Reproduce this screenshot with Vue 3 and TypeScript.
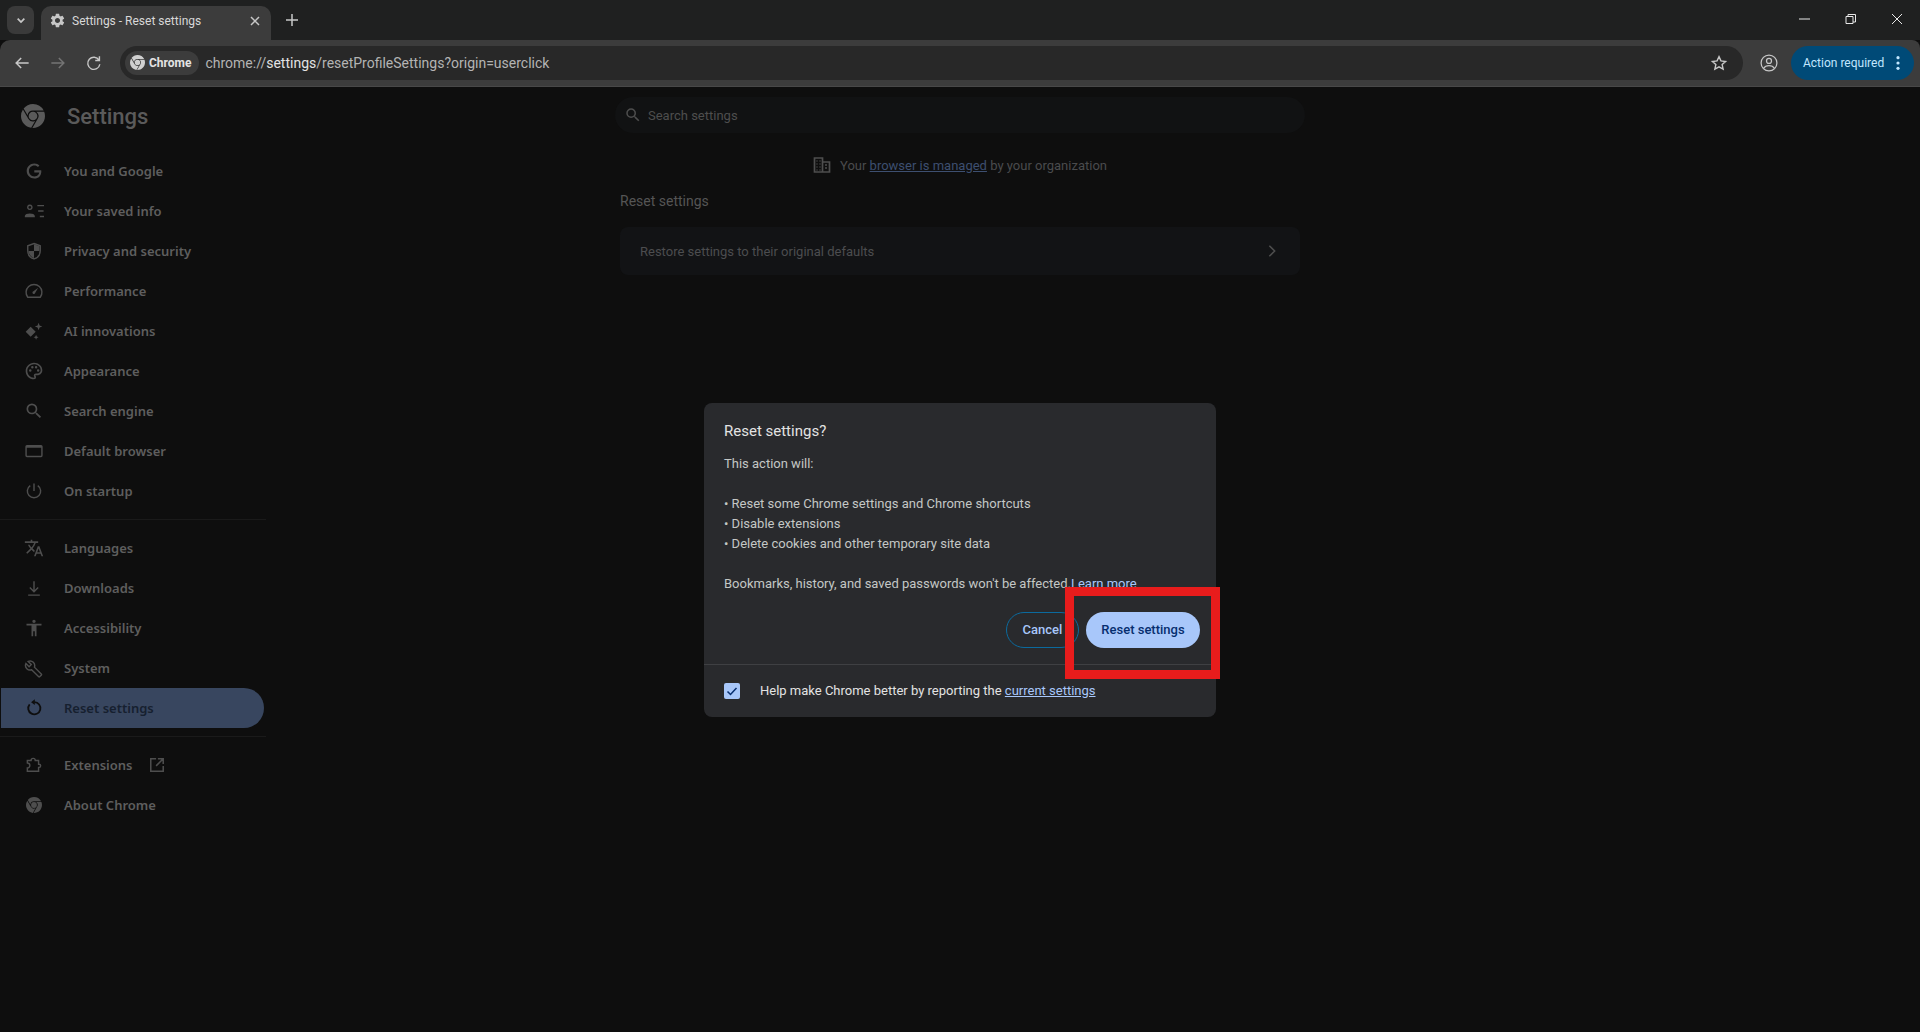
<script setup lang="ts">
interface NavIcon {
  box?: string
  fill?: string[]
  stroke?: string[]
}

interface NavItem {
  label: string
  icon: NavIcon
  active?: boolean
  external?: boolean
}

const chromeLogo =
  'M12 0C8.21 0 4.831 1.757 2.632 4.501l3.953 6.848A5.454 5.454 0 0 1 12 6.545h10.691A12 12 0 0 0 12 0zM1.931 5.47A11.943 11.943 0 0 0 0 12c0 6.012 4.42 10.991 10.189 11.864l3.953-6.847a5.45 5.45 0 0 1-6.865-2.29zm13.342 2.166a5.446 5.446 0 0 1 1.45 7.09l.002.001h-.002l-5.344 9.257c.206.01.413.016.621.016 6.627 0 12-5.373 12-12 0-1.54-.29-3.011-.818-4.364zM12 16.364a4.364 4.364 0 1 1 0-8.728 4.364 4.364 0 0 1 0 8.728Z'
const gear =
  'M19.14 12.94c.04-.3.06-.61.06-.94 0-.32-.02-.64-.07-.94l2.03-1.58a.49.49 0 0 0 .12-.61l-1.92-3.32a.488.488 0 0 0-.59-.22l-2.39.96c-.5-.38-1.03-.7-1.62-.94l-.36-2.54a.484.484 0 0 0-.48-.41h-3.84c-.24 0-.43.17-.47.41l-.36 2.54c-.59.24-1.13.57-1.62.94l-2.39-.96c-.22-.08-.47 0-.59.22L2.74 8.87c-.12.21-.08.47.12.61l2.03 1.58c-.05.3-.09.63-.09.94s.02.64.07.94l-2.03 1.58a.49.49 0 0 0-.12.61l1.92 3.32c.12.22.37.29.59.22l2.39-.96c.5.38 1.03.7 1.62.94l.36 2.54c.05.24.24.41.48.41h3.84c.24 0 .44-.17.47-.41l.36-2.54c.59-.24 1.13-.56 1.62-.94l2.39.96c.22.08.47 0 .59-.22l1.92-3.32c.12-.22.07-.47-.12-.61l-2.01-1.58zM12 15.6c-1.98 0-3.6-1.62-3.6-3.6s1.62-3.6 3.6-3.6 3.6 1.62 3.6 3.6-1.62 3.6-3.6 3.6z'
const search =
  'M15.5 14h-.79l-.28-.27A6.471 6.471 0 0 0 16 9.5 6.5 6.5 0 1 0 9.5 16c1.61 0 3.09-.59 4.23-1.57l.27.28v.79l5 4.99L20.49 19l-4.99-5zm-6 0C7.01 14 5 11.99 5 9.5S7.01 5 9.5 5 14 7.01 14 9.5 11.99 14 9.5 14z'

const navGroups: NavItem[][] = [
  [
    {
      label: 'You and Google',
      icon: {
        box: '-4 -4 32 32',
        fill: [
          'M12.48 10.92v3.28h7.84c-.24 1.84-.853 3.187-1.787 4.133-1.147 1.147-2.933 2.4-6.053 2.4-4.827 0-8.6-3.893-8.6-8.72s3.773-8.72 8.6-8.72c2.6 0 4.507 1.027 5.907 2.347l2.307-2.307C18.747 1.44 16.133 0 12.48 0 5.867 0 .307 5.387.307 12s5.56 12 12.173 12c3.573 0 6.267-1.173 8.373-3.36 2.16-2.16 2.84-5.213 2.84-7.667 0-.76-.053-1.467-.173-2.053H12.48z'
        ]
      }
    },
    {
      label: 'Your saved info',
      icon: {
        fill: ['M1 19.500V18c0-2 3-3 6-3s6 1 6 3v1.500z'],
        stroke: ['M7 5a2.500 2.500 0 1 0 .01 0zM16 5.500h8M17 12h6.500M19 18.500h5']
      }
    },
    {
      label: 'Privacy and security',
      icon: {
        fill: ['M12 12V4l6.500 2.400V12zM12 12v8.500C8.500 19.300 5.500 15.800 5.500 12z'],
        stroke: ['M12 3l7.500 2.800v5.700c0 4.800-3.200 8.800-7.500 10-4.300-1.200-7.500-5.200-7.500-10V5.800z']
      }
    },
    {
      label: 'Performance',
      icon: {
        fill: ['M10.500 13l6.500-5-4 7a1.600 1.600 0 0 1-2.500-2z'],
        stroke: ['M4.500 19.500a9.500 9.500 0 1 1 15 0z']
      }
    },
    {
      label: 'AI innovations',
      icon: {
        fill: [
          'M8 7l6 6-6 6-6-6zM17.500 2l1.200 3.300 3.300 1.200-3.300 1.200-1.200 3.300-1.200-3.300L13 6.500l3.300-1.200zM14.500 16.500l.9 2.100 2.100.9-2.100.9-.9 2.100-.9-2.100-2.100-.9 2.100-.9z'
        ]
      }
    },
    {
      label: 'Appearance',
      icon: {
        fill: [
          'M12 22C6.490 22 2 17.510 2 12S6.490 2 12 2s10 4.040 10 9c0 3.310-2.690 6-6 6h-1.770c-.280 0-.500.220-.500.500 0 .120.050.230.130.330.410.470.640 1.060.640 1.670A2.500 2.500 0 0 1 12 22zm0-18c-4.410 0-8 3.590-8 8s3.590 8 8 8c.280 0 .500-.220.500-.500a.540.540 0 0 0-.140-.350c-.410-.460-.630-1.050-.630-1.650a2.500 2.500 0 0 1 2.500-2.500H16c2.210 0 4-1.790 4-4 0-3.860-3.590-7-8-7z',
          'M6 11.500a1.500 1.500 0 1 0 3 0 1.500 1.500 0 1 0-3 0zM8.500 7.500a1.500 1.500 0 1 0 3 0 1.500 1.500 0 1 0-3 0zM13 7.500a1.500 1.500 0 1 0 3 0 1.500 1.500 0 1 0-3 0zM15.500 11.500a1.500 1.500 0 1 0 3 0 1.500 1.500 0 1 0-3 0z'
        ]
      }
    },
    { label: 'Search engine', icon: { fill: [search] } },
    {
      label: 'Default browser',
      icon: { stroke: ['M3.500 5.500h17a1 1 0 0 1 1 1v11a1 1 0 0 1-1 1h-17a1 1 0 0 1-1-1v-11a1 1 0 0 1 1-1zM2.500 7.200h19'] }
    },
    {
      label: 'On startup',
      icon: { stroke: ['M12 3v9M7.500 5.500a8 8 0 1 0 9 0'] }
    }
  ],
  [
    {
      label: 'Languages',
      icon: {
        fill: [
          'M12.870 15.070l-2.540-2.510.030-.030c1.740-1.940 2.980-4.170 3.710-6.530H17V4h-7V2H8v2H1v1.990h11.170C11.500 7.920 10.440 9.750 9 11.350 8.070 10.320 7.300 9.190 6.690 8h-2c.730 1.630 1.730 3.170 2.980 4.560l-5.090 5.020L4 19l5-5 3.110 3.110.760-2.040zM18.500 10h-2L12 22h2l1.120-3h4.750L21 22h2l-4.500-12zm-2.620 7l1.620-4.330L19.120 17h-3.240z'
        ]
      }
    },
    {
      label: 'Downloads',
      icon: { stroke: ['M12 4v12M7 11.500l5 5 5-5M5 20.500h14'] }
    },
    {
      label: 'Accessibility',
      icon: {
        fill: ['M12 2c1.100 0 2 .900 2 2s-.900 2-2 2-2-.900-2-2 .900-2 2-2zm9 7h-6v13h-2v-6h-2v6H9V9H3V7h18v2z']
      }
    },
    {
      label: 'System',
      icon: {
        stroke: [
          'M21 19.500l-8.500-8.500c.700-2 .300-4.200-1.300-5.800-1.700-1.700-4.100-2-6.200-1.100l3.700 3.700-2.600 2.600-3.800-3.700c-.900 2-.500 4.500 1.100 6.100 1.600 1.600 3.800 2 5.800 1.300l8.500 8.500c.300.300.700.300 1 0l2.300-2.300c.200-.200.200-.600 0-.800z'
        ]
      }
    },
    {
      label: 'Reset settings',
      active: true,
      icon: {
        fill: ['M13 1.500v7L8.500 5z'],
        stroke: ['M12.500 5a7.300 7.300 0 1 1-5.700 2.600']
      }
    }
  ],
  [
    {
      label: 'Extensions',
      external: true,
      icon: {
        stroke: ['M4 6.500h4.500a2.500 2.500 0 0 1 5 0h4v4.500h.5a2 2 0 0 1 0 4h-.5v4.500H4v-4a3 3 0 0 0 0-6z']
      }
    },
    { label: 'About Chrome', icon: { box: '-3 -3 30 30', fill: [chromeLogo] } }
  ]
]
</script>

<template>
  <div class="window">
    <header class="tabstrip">
      <button class="tab-search">
        <svg viewBox="0 0 24 24" width="16" height="16"><path d="M7 10l5 5 5-5" class="st" stroke-width="2.600" /></svg>
      </button>
      <div class="tab">
        <svg viewBox="0 0 24 24" width="17" height="17"><path :d="gear" fill="#c7c7c7" /></svg>
        <span class="tab-title">Settings - Reset settings</span>
        <svg viewBox="0 0 24 24" width="16" height="16"><path d="M6 6l12 12M18 6L6 18" class="st" stroke-width="2.200" /></svg>
      </div>
      <svg class="new-tab" viewBox="0 0 24 24" width="18" height="18"><path d="M12 4v16M4 12h16" class="st" stroke-width="2" /></svg>
      <div class="caption">
        <svg viewBox="0 0 12 12" width="12" height="12"><path d="M0 6h11" class="cap" /></svg>
        <svg viewBox="0 0 12 12" width="12" height="12"><path d="M1 3.500h7v7H1zM3 3.500V1.500h7.500V9H8" class="cap" /></svg>
        <svg viewBox="0 0 12 12" width="12" height="12"><path d="M1 1l10 10M11 1L1 11" class="cap" /></svg>
      </div>
    </header>

    <div class="toolbar">
      <svg viewBox="0 0 24 24" width="20" height="20"><path d="M20 12H5M11 6l-6 6 6 6" class="st" stroke-width="1.800" /></svg>
      <svg class="disabled" viewBox="0 0 24 24" width="20" height="20"><path d="M4 12h15M13 6l6 6-6 6" class="st" stroke-width="1.800" /></svg>
      <svg viewBox="0 0 24 24" width="20" height="20"><path d="M18 8.500A7.300 7.300 0 1 0 19 13.500M18.500 4v5h-5" class="st" stroke-width="1.700" /></svg>
      <div class="omnibox">
        <span class="chip">
          <svg viewBox="0 0 24 24" width="15" height="15"><path :d="chromeLogo" fill="#d0d0d0" /></svg>
          Chrome
        </span>
        <span class="url">chrome://<b>settings</b>/resetProfileSettings?origin=userclick</span>
        <svg class="star" viewBox="0 0 24 24" width="18" height="18"><path d="M12 3.500l2.600 5.700 6.200.7-4.600 4.200 1.300 6.100L12 17.100l-5.500 3.100 1.300-6.100-4.600-4.200 6.200-.7z" class="st" stroke-width="1.900" /></svg>
      </div>
      <svg class="profile" viewBox="0 0 24 24" width="20" height="20">
        <circle cx="12" cy="12" r="9.500" class="st" stroke-width="1.500" />
        <circle cx="12" cy="9.500" r="3" class="st" stroke-width="1.500" />
        <path d="M5.500 18.500c1.500-2.500 4-3.300 6.500-3.300s5 .8 6.500 3.300" class="st" stroke-width="1.500" />
      </svg>
      <div class="action">
        <span>Action required</span>
        <svg viewBox="0 0 4 18" width="4" height="16"><circle cx="2" cy="3" r="1.800" /><circle cx="2" cy="9" r="1.800" /><circle cx="2" cy="15" r="1.800" /></svg>
      </div>
    </div>

    <div class="page">
      <aside class="sidebar">
        <div class="brand">
          <svg viewBox="0 0 24 24" width="24" height="24"><path :d="chromeLogo" fill="#5a5a5a" /></svg>
          <span>Settings</span>
        </div>
        <nav>
          <template v-for="(group, i) in navGroups" :key="i">
            <hr v-if="i > 0" />
            <a v-for="item in group" :key="item.label" class="nav-item" :class="{ active: item.active }">
              <svg :viewBox="item.icon.box ?? '0 0 24 24'" width="20" height="20" class="nav-icon">
                <path v-for="d in item.icon.fill" :key="d" :d="d" class="nav-fill" />
                <path v-for="d in item.icon.stroke" :key="d" :d="d" class="nav-stroke" />
              </svg>
              <span>{{ item.label }}</span>
              <svg v-if="item.external" class="ext" viewBox="0 0 18 18" width="16" height="16">
                <path d="M8 2H2v14h14v-6M10 2h6v6M16 2L8 10" class="nav-stroke" />
              </svg>
            </a>
          </template>
        </nav>
      </aside>

      <main class="content">
        <div class="search-box">
          <svg viewBox="0 0 24 24" width="18" height="18"><path :d="search" fill="#4e4e4e" /></svg>
          <span>Search settings</span>
        </div>
        <div class="managed">
          <svg viewBox="0 0 18 18" width="18" height="18">
            <path d="M1.500 2h8v14h-8zM9.500 6h7v10h-7zM3.500 5h1M6.500 5h1M3.500 8h1M6.500 8h1M3.500 11h1M6.500 11h1M3.500 14h1M6.500 14h1M12 9h2M12 12h2" class="nav-stroke" />
          </svg>
          <span>Your <a>browser is managed</a> by your organization</span>
        </div>
        <h2>Reset settings</h2>
        <div class="card">
          <span>Restore settings to their original defaults</span>
          <svg viewBox="0 0 18 18" width="16" height="16"><path d="M6 3l6 6-6 6" class="nav-stroke" /></svg>
        </div>
      </main>

      <div class="scrim">
        <section class="dialog">
          <div class="dialog-body">
            <h3>Reset settings?</h3>
            <p>This action will:</p>
            <p class="gap">• Reset some Chrome settings and Chrome shortcuts</p>
            <p>• Disable extensions</p>
            <p>• Delete cookies and other temporary site data</p>
            <p class="gap">Bookmarks, history, and saved passwords won't be affected.<a class="learn">Learn more</a></p>
            <div class="buttons">
              <button class="btn cancel">Cancel</button>
              <button class="btn confirm">Reset settings</button>
            </div>
          </div>
          <div class="dialog-foot">
            <span class="check">
              <svg viewBox="0 0 16 16" width="16" height="16"><path d="M3.500 8.500l3 3 6-6.500" fill="none" stroke="#062e6f" stroke-width="1.500" /></svg>
            </span>
            <span>Help make Chrome better by reporting the <a>current settings</a></span>
          </div>
          <div class="highlight"></div>
        </section>
      </div>
    </div>
  </div>
</template>

<style scoped>
.window {
  height: 1032px;
  overflow: hidden;
  display: flex;
  flex-direction: column;
  background: #0e0e0e;
  font-family: Roboto, "Noto Sans", sans-serif;
}

button {
  font-family: inherit;
  border: none;
}

.st {
  fill: none;
  stroke: #c7c7c7;
}

.cap {
  fill: none;
  stroke: #e8e8e8;
  stroke-width: 1;
}

.tabstrip {
  height: 40px;
  flex: none;
  display: flex;
  align-items: flex-end;
  background: #1f2020;
  padding-left: 7px;
}

.tab-search {
  width: 27px;
  height: 28px;
  margin-bottom: 6px;
  border-radius: 8px;
  background: #3a3a3a;
  display: flex;
  align-items: center;
  justify-content: center;
  padding: 0;
}

.tab {
  position: relative;
  width: 230px;
  height: 34px;
  margin-left: 7px;
  box-sizing: border-box;
  padding: 0 8px 5px 8px;
  display: flex;
  align-items: center;
  gap: 6px;
  background: #3c3c3c;
  border-radius: 10px 10px 0 0;
  color: #d8d8d8;
  font-size: 12px;
}

.tab-title {
  flex: 1;
  white-space: nowrap;
}

.new-tab {
  margin: 0 0 11px 12px;
}

.caption {
  margin-left: auto;
  align-self: center;
  width: 138px;
  display: flex;
  align-items: center;
  justify-content: space-around;
  padding-bottom: 2px;
}

.toolbar {
  height: 47px;
  flex: none;
  box-sizing: border-box;
  display: flex;
  align-items: center;
  gap: 16px;
  padding: 0 6px 1px 12px;
  background: #3c3c3c;
  border-bottom: 1px solid #484848;
  border-radius: 10px 8px 0 0;
}

.disabled {
  opacity: 0.4;
}

.omnibox {
  flex: 1;
  height: 34px;
  display: flex;
  align-items: center;
  padding: 0 15px 0 5px;
  border-radius: 17px;
  background: #282828;
}

.chip {
  height: 24px;
  padding: 0 8px 0 5px;
  display: flex;
  align-items: center;
  gap: 4px;
  border-radius: 12px;
  background: #3c3c3c;
  color: #e3e3e3;
  font-size: 12px;
  font-weight: 700;
}

.url {
  margin-left: 6px;
  flex: 1;
  color: #b4b4b4;
  font-size: 14px;
  white-space: nowrap;
}

.url b {
  color: #e3e3e3;
  font-weight: 400;
}

.profile {
  margin-right: -4px;
}

.action {
  width: 123px;
  height: 34px;
  box-sizing: border-box;
  display: flex;
  align-items: center;
  justify-content: space-between;
  padding: 0 14px 0 12px;
  border-radius: 17px;
  background: #004a77;
  color: #c2e7ff;
  font-size: 12px;
}

.action svg {
  fill: #c2e7ff;
}

.page {
  position: relative;
  flex: 1;
  display: grid;
  grid-template-columns: 266px 1fr 266px;
}

.brand {
  height: 56px;
  padding-top: 2px;
  box-sizing: border-box;
  display: flex;
  align-items: center;
  gap: 22px;
  padding-left: 21px;
  color: #5a5a5a;
  font-size: 22px;
  font-weight: 500;
}

.sidebar nav {
  padding-top: 8px;
}

.sidebar hr {
  margin: 8px 0;
  border: none;
  border-top: 1px solid #1a1a1a;
}

.nav-item {
  height: 40px;
  margin-right: 2px;
  margin-left: 1px;
  padding-left: 23px;
  display: flex;
  align-items: center;
  gap: 20px;
  color: #5e5e5e;
  font-family: "Noto Sans", sans-serif;
  font-size: 13px;
  font-weight: 600;
  border-radius: 0 20px 20px 0;
}

.nav-item.active {
  background: #38465f;
  color: #16202f;
}

.nav-fill {
  fill: #4e4e4e;
}

.nav-stroke {
  fill: none;
  stroke: #4e4e4e;
  stroke-width: 1.700;
}

.nav-item.active .nav-stroke {
  stroke: #0e0e0e;
  stroke-width: 2.200;
}

.nav-item.active .nav-fill {
  fill: #0e0e0e;
}

.ext {
  margin-left: -4px;
}

.content {
  grid-column: 2;
  display: flex;
  flex-direction: column;
  align-items: center;
  padding-top: 10px;
}

.search-box {
  width: 690px;
  height: 36px;
  flex: none;
  box-sizing: border-box;
  padding-left: 9px;
  display: flex;
  align-items: center;
  gap: 6px;
  border-radius: 18px;
  background: #111213;
  color: #4e4e4e;
  font-size: 13px;
}

.managed {
  margin-top: 22px;
  height: 20px;
  display: flex;
  align-items: center;
  gap: 9px;
  color: #4a4b4d;
  font-size: 13px;
}

.managed a {
  color: #3d4f70;
  text-decoration: underline;
}

.content h2 {
  width: 680px;
  margin: 16px 0 0;
  color: #555;
  font-size: 14px;
  font-weight: 400;
  line-height: 20px;
}

.card {
  width: 680px;
  height: 48px;
  margin-top: 16px;
  box-sizing: border-box;
  padding: 0 20px;
  display: flex;
  align-items: center;
  justify-content: space-between;
  border-radius: 8px;
  background: #121315;
  color: #4c4d4f;
  font-size: 13px;
}

.scrim {
  position: absolute;
  inset: 0;
  display: flex;
  align-items: center;
  justify-content: center;
}

.dialog {
  position: relative;
  width: 512px;
  border-radius: 8px;
  background: #292a2d;
  color: #c4c7c5;
  font-size: 13px;
  line-height: 20px;
}

.dialog-body {
  padding: 18px 16px 16px 20px;
}

.dialog h3 {
  margin: 0 0 13px;
  color: #e3e3e3;
  font-size: 15px;
  font-weight: 400;
  line-height: 20px;
}

.dialog p {
  margin: 0;
}

.dialog p.gap {
  margin-top: 20px;
}

.learn {
  color: #a8c7fa;
}

.buttons {
  margin-top: 18px;
  display: flex;
  justify-content: flex-end;
  gap: 7px;
}

.btn {
  height: 36px;
  padding: 0;
  border-radius: 18px;
  font-size: 13px;
  font-weight: 500;
}

.cancel {
  width: 73px;
  background: transparent;
  border: 1px solid #0b6a9e;
  color: #a8c7fa;
  font-weight: 500;
}

.confirm {
  width: 114px;
  background: #a8c7fa;
  color: #062e6f;
}

.dialog-foot {
  height: 53px;
  box-sizing: border-box;
  padding: 0 20px;
  display: flex;
  align-items: center;
  gap: 20px;
  border-top: 1px solid #3f4043;
  color: #e3e3e3;
}

.dialog-foot a {
  color: #a8c7fa;
  text-decoration: underline;
}

.check {
  width: 16px;
  height: 16px;
  flex: none;
  border-radius: 2px;
  background: #a8c7fa;
  display: flex;
}

.highlight {
  position: absolute;
  right: -4px;
  top: 184px;
  width: 155px;
  height: 92px;
  box-sizing: border-box;
  border: 9px solid #e81c1c;
}
</style>
